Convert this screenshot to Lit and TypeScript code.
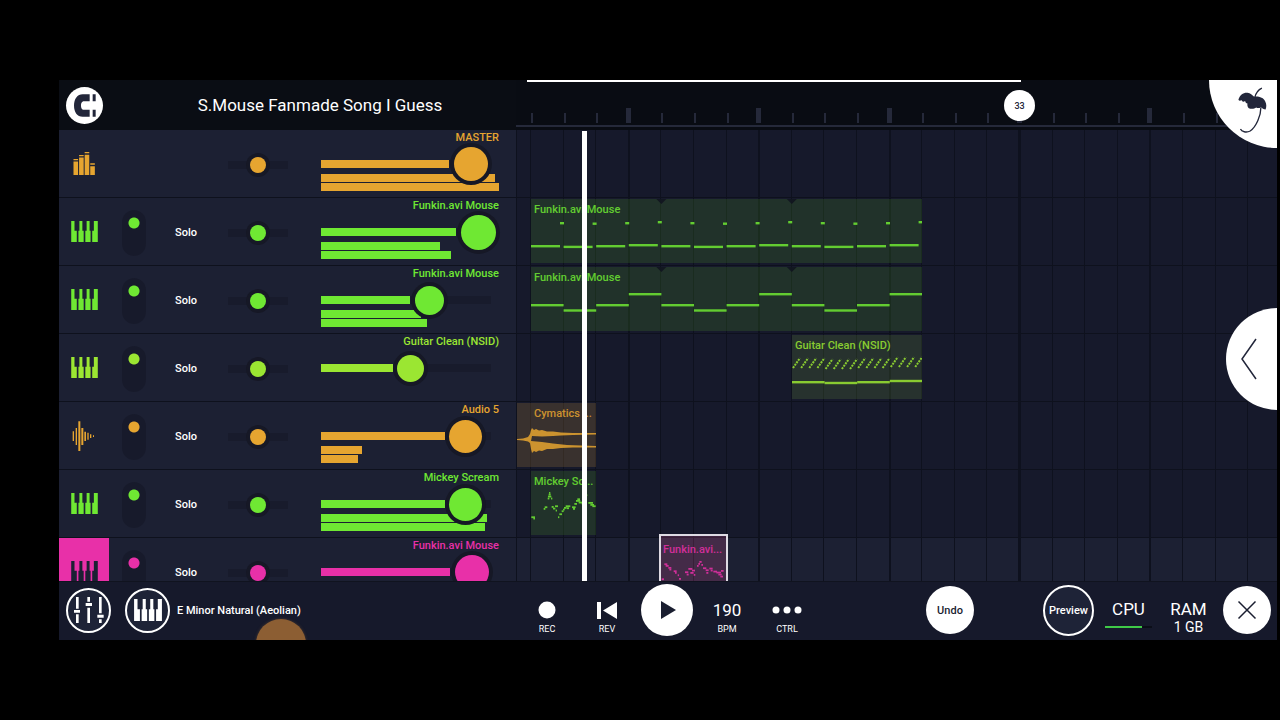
import { LitElement, html, svg, css, nothing } from "lit";
import { customElement } from "lit/decorators.js";
import { classMap } from "lit/directives/class-map.js";
import { styleMap } from "lit/directives/style-map.js";

type Icon = "master" | "keys" | "wave";

interface Clip {
  label: string;
  start: number;
  width: number;
  tone: string;
  art: unknown;
}

interface Track {
  name: string;
  icon: Icon;
  tone: string;
  knob: number;
  size: number;
  meters: number[];
  clips: Clip[];
  selected?: boolean;
}

const BEAT = 32.6;
const FIRST = 15;
const VOLUME_WIDTH = 178;

const beatX = (n: number) => Math.round(FIRST + n * BEAT);
const count = (n: number) => Array.from({ length: n }, (_, i) => i);

const keysIcon = svg`<path d="M0 0H10V30H17V64H0ZM25 0H34V30H38V64H22V30H25ZM47 0H56V30H59V64H43V30H47ZM69 0H81V64H64V30H69Z" />`;

const icons = {
  keys: html`<svg class="glyph" width="27" height="21" viewBox="0 0 81 64">${keysIcon}</svg>`,
  master: html`<svg class="glyph" width="22" height="23" viewBox="68 246 66 70">
    <path d="M69 275h14v41H69zM69 267h14v4H69zM86 263h14v53H86zM86 255h14v4H86zM103 254h14v62h-14zM103 246h14v4h-14zM120 289h14v27h-14zM120 280h14v5h-14z" />
  </svg>`,
  wave: html`<svg class="glyph" width="27" height="30" viewBox="62 90 81 90">
    <path d="M67 121h4v29h-4zM76 111h4v51h-4zM84 91h6v89h-6zM93 111h6v51h-6zM102 122h5v28h-5zM111 125h4v21h-4zM119 130h4v11h-4zM128 133h3v5h-3z" />
  </svg>`,
};

const notch = (n: number) => svg`<path class="notch" d="M${n * BEAT - 5} 0h10l-5 5z" />`;

const chordArt = svg`
  ${count(12).map((k) => svg`
    <rect x=${k * BEAT + 29} y=${[23, 23.5, 23, 22][k % 4]} width="4" height="2.4" />
    <rect x=${k * BEAT} y=${[46, 46.7, 46, 45][k % 4]} width="29" height="2.4" />`)}
  ${notch(4)}${notch(8)}`;

const bassArt = svg`
  ${count(12).map((k) => svg`<rect x=${k * BEAT} y=${[37, 42.3, 37, 26][k % 4]} width=${BEAT} height="2.4" />`)}
  ${notch(4)}${notch(8)}`;

const guitarArt = svg`
  ${count(16).map((k) => {
    const y = [33, 34, 33, 32][Math.floor(k / 4)];
    return svg`<path class="strum" d="M${k * 8.15 + 1} ${y}l7 -10" />`;
  })}
  ${count(4).map((k) => svg`<rect x=${k * BEAT} y=${[46, 46.8, 46, 44.8][k]} width=${BEAT} height="2.4" />`)}`;

const audioArt = svg`
  <path d="M0 36L6 35.5L11 34L13 31L14 27L15 25L17 27L19 26L22 27.5L25 27L30 28.5L36 28.5L44 29.5L56 30L79 30V31.5L56 32L44 32.5L36 33L25 33.5L15 33L14 38L25 39L36 40.5L50 42L79 43V44.500L56 44.500L44 45L36 46L30 46L25 48L22 47.500L19 49L17 48L15 50L14 46L13 40L11 38.500L6 37.500L0 37Z" />`;

const dots = (list: number[][], scale = 3) =>
  list.map(([x, y, w = 7]) => svg`<rect x=${x / scale} y=${y / scale} width=${w / scale} height="1.8" />`);

const screamArt = svg`${dots([
  [1, 136, 11], [7, 140, 5], [38, 111, 5], [41, 106, 8], [50, 80, 5], [51, 74, 10], [53, 68, 6], [54, 63, 4],
  [60, 80, 4], [62, 105, 6], [66, 110, 7], [72, 103, 9], [74, 116, 4], [81, 136, 4], [85, 127, 8], [92, 118, 6],
  [96, 113, 5], [99, 108, 8], [104, 103, 14], [108, 109, 6], [123, 106, 11], [126, 111, 6], [130, 96, 8],
  [135, 87, 13], [139, 82, 8], [143, 92, 12], [152, 95, 7], [160, 84, 6], [164, 70, 5], [172, 93, 14],
  [178, 99, 11], [184, 103, 10],
])}`;

const pinkArt = svg`${dots([
  [16, 88, 9], [20, 93, 9], [28, 99, 9], [31, 104, 6], [44, 109, 9], [48, 114, 5], [56, 121, 4], [60, 132, 6],
  [8, 133, 7], [78, 112, 10], [83, 119, 6], [88, 102, 12], [94, 114, 10], [99, 107, 9], [104, 120, 5], [114, 93, 5],
  [118, 87, 5], [121, 81, 7], [127, 90, 5], [132, 100, 10], [140, 106, 9], [142, 114, 6], [151, 101, 10],
  [155, 107, 6], [163, 110, 11], [172, 113, 14], [178, 119, 10], [184, 125, 8], [186, 108, 8],
])}`;

const clip = (label: string, from: number, to: number, tone: string, art: unknown): Clip => ({
  label,
  start: beatX(from),
  width: beatX(to) - beatX(from),
  tone,
  art,
});

const TRACKS: Track[] = [
  { name: "MASTER", icon: "master", tone: "orange", knob: 150, size: 34, meters: [174, 178], clips: [] },
  {
    name: "Funkin.avi Mouse", icon: "keys", tone: "green", knob: 157, size: 35, meters: [119, 130],
    clips: [clip("Funkin.avi Mouse", 0, 12, "green", chordArt)],
  },
  {
    name: "Funkin.avi Mouse", icon: "keys", tone: "green", knob: 108, size: 29, meters: [100, 106],
    clips: [clip("Funkin.avi Mouse", 0, 12, "green", bassArt)],
  },
  {
    name: "Guitar Clean (NSID)", icon: "keys", tone: "lime", knob: 90, size: 27, meters: [],
    clips: [clip("Guitar Clean (NSID)", 8, 12, "lime", guitarArt)],
  },
  {
    name: "Audio 5", icon: "wave", tone: "orange", knob: 145, size: 33, meters: [41, 37],
    clips: [{ label: "Cymatics ...", start: 1, width: 79, tone: "orange inset", art: audioArt }],
  },
  {
    name: "Mickey Scream", icon: "keys", tone: "green", knob: 145, size: 33, meters: [166, 164],
    clips: [clip("Mickey Sc...", 0, 2, "green", screamArt)],
  },
  {
    name: "Funkin.avi Mouse", icon: "keys", tone: "pink", knob: 151, size: 34, meters: [], selected: true,
    clips: [{ label: "Funkin.avi...", start: 143, width: 69, tone: "pink picked", art: pinkArt }],
  },
];

const shared = css`
  :host { display: block; box-sizing: border-box; font-family: Roboto, "Liberation Sans", sans-serif; font-size: 11px; font-weight: 500; color: #fff; }
  * { box-sizing: border-box; }
  button { border: 0; padding: 0; margin: 0; background: none; color: inherit; font: inherit; cursor: pointer; }
  svg { display: block; }
  .orange { --tone: #e6a530; --clip: #d69a4030; }
  .green { --tone: #6fe833; --clip: #55b02a2c; }
  .lime { --tone: #9be632; --clip: #86b84028; }
  .pink { --tone: #e830a8; --clip: #d8509838; }
`;

@customElement("track-strip")
class TrackStrip extends LitElement {
  static properties = { track: { attribute: false } };
  declare track: Track;

  static styles = [shared, css`
    .strip { display: grid; grid-template-columns: 50px 50px 54px 89px 1fr; height: 68px; padding-right: 17px; border-bottom: 1px solid #0e111d; background: #1c2033; }
    .icon { display: grid; place-items: center; height: 67px; }
    .glyph { fill: var(--tone); }
    .chosen .icon { background: var(--tone); }
    .chosen .glyph { fill: #1c2033; }
    .cell { display: grid; place-items: center; }
    .mute { appearance: none; width: 24px; height: 46px; margin: 0; border-radius: 12px; background: radial-gradient(circle at 12px 13px, var(--tone) 5px, #171a2b 6px); }
    .solo { height: 40px; width: 44px; padding-bottom: 2px; }
    .range { appearance: none; margin: 0; background: none; height: 36px; }
    .pan { --size: 16px; width: 60px; background: linear-gradient(#181b2c, #181b2c) center / 60px 8px no-repeat; }
    .range::-webkit-slider-runnable-track { height: var(--size); }
    .range::-webkit-slider-thumb { appearance: none; width: var(--size); height: var(--size); border-radius: 50%; background: var(--tone); box-shadow: 0 0 0 4px #161826; }
    .levels { display: grid; grid-template-rows: 16px 36px 18px; padding-left: 19px; }
    .name { justify-self: end; line-height: 16px; color: var(--tone); white-space: nowrap; }
    .volume { position: relative; z-index: 1; width: 178px;
      background: linear-gradient(var(--tone), var(--tone)) left center / var(--fill) 8px no-repeat, linear-gradient(#181b2c, #181b2c) left center / 170px 8px no-repeat; }
    .meters { display: grid; gap: 1px; margin-top: -8px; align-content: start; }
    .meter { height: 8px; background: var(--tone); }
  `];

  render() {
    const t = this.track;
    const value = (t.knob - t.size / 2) / (VOLUME_WIDTH - t.size);
    return html`
      <div class=${classMap({ strip: true, [t.tone]: true, chosen: !!t.selected })}>
        <div class="icon">${icons[t.icon]}</div>
        <div class="cell">${t.icon === "master" ? nothing : html`<input class="mute" type="checkbox" checked aria-label="Track on" />`}</div>
        <div class="cell">${t.icon === "master" ? nothing : html`<button class="solo">Solo</button>`}</div>
        <div class="cell"><input class="range pan" type="range" aria-label="Pan" /></div>
        <div class="levels">
          <label class="name" for="volume">${t.name}</label>
          <input id="volume" class="range volume" type="range" min="0" max="1" step="any" .value=${String(value)}
            style=${styleMap({ "--size": `${t.size}px`, "--fill": `${Math.round(t.knob - t.size / 2 - 5)}px` })} />
          <div class="meters">${t.meters.map((m) => html`<div class="meter" style=${styleMap({ width: `${m}px` })}></div>`)}</div>
        </div>
      </div>`;
  }
}

@customElement("track-lane")
class TrackLane extends LitElement {
  static properties = { track: { attribute: false } };
  declare track: Track;

  static styles = [shared, css`
    .lane { position: relative; height: 68px; border-bottom: 1px solid #0e111d; background: #16192b; }
    .chosen { background: #1c2033; }
    .grid { position: absolute; inset: 0; width: 100%; height: 100%; }
    .line { fill: #0e111e; }
    .clip { position: absolute; top: 1px; height: 64px; background: var(--clip); overflow: hidden; }
    .label { position: absolute; top: 3px; left: 3px; line-height: 16px; color: var(--tone); opacity: 0.85; white-space: nowrap; }
    .inset .label { left: 17px; }
    .picked { top: -4px; height: 70px; border: 2px solid #dedbe3; }
    .picked .label { top: 6px; left: 2px; }
    .picked .notes { margin: -2px; }
    .notes { fill: var(--tone); opacity: 0.85; overflow: hidden; }
    .notch { fill: #10131f; }
    .strum { fill: none; stroke: var(--tone); stroke-width: 2; stroke-dasharray: 2 1; }
  `];

  render() {
    const t = this.track;
    return html`
      <div class=${classMap({ lane: true, chosen: !!t.selected })}>
        <svg class="grid">
          <rect class="line" x="0" y="0" width="1" height="68" />
          ${count(80).map((k) => svg`<rect class="line" x=${beatX(k) - (k % 16 === 15 ? 2 : 1)} y="0" width=${k % 16 === 15 ? 3 : k % 4 === 3 ? 2 : 1} height="68" />`)}
        </svg>
        ${t.clips.map((c) => html`
          <div class="clip ${c.tone}" style=${styleMap({ left: `${c.start}px`, width: `${c.width}px` })}>
            <svg class="notes" width=${c.width} height="64">${c.art}</svg>
            <span class="label">${c.label}</span>
          </div>`)}
      </div>`;
  }
}

@customElement("time-ruler")
class TimeRuler extends LitElement {
  static styles = [shared, css`
    :host { position: relative; height: 50px; background: #090c13; }
    .ticks { width: 100%; height: 50px; }
    .tick { fill: #25293a; }
    .view { fill: #fff; }
    .end { position: absolute; left: 488px; top: 10px; width: 31px; height: 31px; border-radius: 50%; background: #fff; color: #22263a; font-size: 9px; }
  `];

  render() {
    return html`
      <svg class="ticks">
        <rect class="view" x="11" y="0" width="494" height="2" />
        ${count(80).map((k) => k % 4 === 3
          ? svg`<rect class="tick" x=${beatX(k) - 3} y="28" width="5" height="15" />`
          : svg`<rect class="tick" x=${beatX(k)} y="33" width="2" height="10" />`)}
        <rect class="tick" x="0" y="45" width="100%" height="2" />
      </svg>
      <button class="end">33</button>`;
  }
}

@customElement("transport-bar")
class TransportBar extends LitElement {
  static styles = [shared, css`
    .bar { position: relative; display: flex; align-items: center; height: 59px; padding: 0 6px 2px 0; background: #16192b; border-top: 1px solid #10131f; overflow: hidden; }
    .tools { display: flex; align-items: center; width: 457px; flex: none; padding-left: 7px; }
    .ring { display: grid; place-items: center; flex: none; border: 2px solid #fff; border-radius: 50%; background: #1e2337; fill: #fff; width: 45px; height: 45px; margin-right: 14px; }
    .scale { margin-left: -7px; }
    .touch { position: absolute; left: 197px; top: 37px; width: 50px; height: 50px; border-radius: 50%; background: #8c5e33; box-shadow: 0 0 3px #4d3a2e; }
    .transport { display: grid; grid-template-columns: repeat(5, 60px); padding-left: 1px; height: 56px; }
    .action { display: grid; grid-template-rows: 22px 16px; padding-top: 17px; place-items: center; align-content: start; fill: #fff; }
    .caption { font-size: 9px; font-weight: 400; line-height: 16px; }
    .value { font-size: 17px; font-weight: 400; line-height: 22px; }
    .disc { display: grid; place-items: center; flex: none; width: 48px; height: 48px; border-radius: 50%; background: #fff; color: #1a1e30; fill: #1a1e30; }
    .play { width: 52px; height: 52px; place-self: center; }
    .undo { margin-left: auto; }
    .preview { width: 51px; height: 51px; margin: 0 11px 0 69px; }
    .stat { display: grid; width: 47px; height: 56px; padding-top: 16px; align-content: start; justify-items: center; font-size: 17px; font-weight: 400; line-height: 22px; white-space: nowrap; }
    .memory { margin: 0 11px 0 13px; }
    .amount { font-size: 14px; line-height: 14px; }
    .cpu { appearance: none; width: 47px; height: 2px; margin-top: 6px; border: 0; background: #0b0e18; }
    .cpu::-webkit-progress-bar { background: #0b0e18; }
    .cpu::-webkit-progress-value { background: #3fc947; }
    .cross { stroke: #1a1e30; stroke-width: 1.5; fill: none; }
  `];

  render() {
    return html`
      <div class="bar">
        <div class="touch"></div>
        <div class="tools">
          <button class="ring" aria-label="Mixer">
            <svg width="30" height="26" viewBox="70 620 90 78">
              <path d="M76 620h8v35h-8zM70 659h18v8H70zM76 672h8v26h-8zM110 620h8v14h-8zM105 638h19v9h-19zM110 652h8v46h-8zM145 620h8v49h-8zM140 673h19v9h-19zM145 687h8v11h-8z" />
            </svg>
          </button>
          <button class="ring" aria-label="Keyboard">
            <svg width="28" height="22" viewBox="0 0 81 64">${keysIcon}</svg>
          </button>
          <button class="scale">E Minor Natural (Aeolian)</button>
        </div>
        <div class="transport">
          <button class="action">
            <svg width="18" height="18" viewBox="0 0 18 18"><circle cx="9" cy="9" r="8.5" /></svg>
            <span class="caption">REC</span>
          </button>
          <button class="action">
            <svg width="20" height="17" viewBox="0 0 20 17"><path d="M0 0h4v17H0zM20 0v17L6 8.5z" /></svg>
            <span class="caption">REV</span>
          </button>
          <button class="disc play" aria-label="Play">
            <svg width="18" height="20" viewBox="0 0 18 20"><path d="M3 1v18l15-9z" /></svg>
          </button>
          <button class="action"><span class="value">190</span><span class="caption">BPM</span></button>
          <button class="action">
            <svg width="30" height="8" viewBox="0 0 30 8"><circle cx="4" cy="4" r="3.5" /><circle cx="15" cy="4" r="3.5" /><circle cx="26" cy="4" r="3.5" /></svg>
            <span class="caption">CTRL</span>
          </button>
        </div>
        <button class="disc undo">Undo</button>
        <button class="ring preview">Preview</button>
        <div class="stat">
          <label for="cpu">CPU</label>
          <progress id="cpu" class="cpu" max="100" value="79"></progress>
        </div>
        <div class="stat memory"><span>RAM</span><span class="amount">1 GB</span></div>
        <button class="disc" aria-label="Close">
          <svg width="20" height="20" viewBox="0 0 20 20"><path class="cross" d="M1.5 1.5l17 17M18.5 1.5l-17 17" /></svg>
        </button>
      </div>`;
  }
}

@customElement("app-root")
class AppRoot extends LitElement {
  static styles = [shared, css`
    :host { height: 100vh; padding: 80px 3px 80px 59px; background: #000; }
    .app { position: relative; display: flex; flex-direction: column; height: 100%; overflow: hidden; background: #16192b; }
    .top { display: grid; grid-template-columns: 457px 1fr; flex: none; }
    .heading { display: flex; align-items: center; height: 50px; padding: 0 7px; background: #0a0d14; }
    .magnet { display: grid; place-items: center; width: 37px; height: 37px; border-radius: 50%; background: #fff; fill: #22263a; }
    .title { flex: 1; margin: 0; padding-left: 28px; text-align: center; font-size: 17px; font-weight: 400; line-height: 24px; }
    .song { display: grid; grid-template-columns: 457px 1fr; flex: 1; min-height: 0; overflow: hidden; }
    .lanes { position: relative; }
    .playhead { position: absolute; top: 1px; bottom: 0; left: 66px; width: 5px; background: #fff; }
    .brand { position: absolute; top: -68px; right: -68px; width: 136px; height: 136px; border-radius: 50%; background: #fff; }
    .umbrella { position: absolute; left: 27px; top: 74px; fill: #22263a; }
    .stem { fill: none; stroke: #22263a; stroke-width: 4; }
    .drawer { position: absolute; top: 228px; right: -51px; width: 102px; height: 102px; border-radius: 50%; background: #fff; padding-left: 15px; }
    .chevron { fill: none; stroke: #22263a; stroke-width: 1.5; }
  `];

  render() {
    return html`
      <main class="app">
        <header class="top">
          <div class="heading">
            <button class="magnet" aria-label="Snap">
              <svg width="22" height="23" viewBox="62 70 66 68">
                <path d="M109 70H88C72 70 62 84 62 104S72 138 88 138H109V117H92C85 117 83 110 83 104S85 91 92 91H109ZM118 70h9v21h-9zM118 117h9v21h-9z" />
              </svg>
            </button>
            <h1 class="title">S.Mouse Fanmade Song I Guess</h1>
          </div>
          <time-ruler></time-ruler>
        </header>
        <section class="song">
          <div>${TRACKS.map((t) => html`<track-strip .track=${t}></track-strip>`)}</div>
          <div class="lanes">
            ${TRACKS.map((t) => html`<track-lane .track=${t}></track-lane>`)}
            <div class="playhead"></div>
          </div>
        </section>
        <transport-bar></transport-bar>
        <button class="brand" aria-label="Menu">
          <svg class="umbrella" width="32" height="47" viewBox="650 50 95 140">
            <path d="M657 91C661 76 672 69 684 70C693 71 698 77 704 82C716 80 732 84 737 96C741 104 741 112 738 120C732 119 728 116 724 113C720 116 714 117 710 114C704 119 694 119 688 116C684 112 683 107 684 102C680 102 678 99 677 95C672 98 668 97 666 92C663 95 659 95 657 91Z" />
            <path class="stem" d="M706 84C709 70 716 61 727 56M724 114C724 138 710 172 692 184C680 190 667 186 663 178" />
          </svg>
        </button>
        <button class="drawer" aria-label="Open panel">
          <svg width="17" height="42" viewBox="0 0 17 42"><path class="chevron" d="M15 1L1 21L15 41" /></svg>
        </button>
      </main>`;
  }
}
